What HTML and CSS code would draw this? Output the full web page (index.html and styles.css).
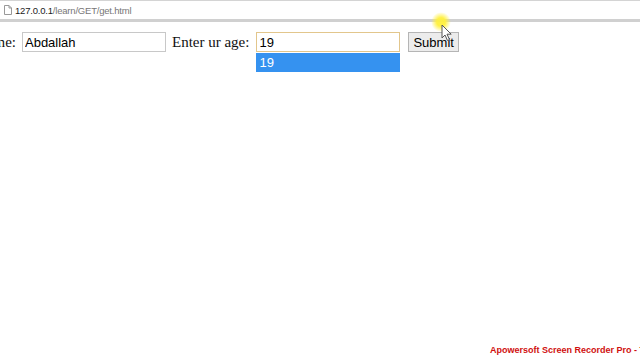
FILE: index.html
```html
<!DOCTYPE html>
<html lang="en">
<head>
  <meta charset="UTF-8">
  <title>get.html</title>
  <link rel="stylesheet" href="styles.css">
</head>
<body>
  <!-- Address bar -->
  <div class="address-bar">
    <svg class="page-icon" width="8" height="10" viewBox="0 0 8 10">
      <path d="M0.5 0.5h4.5l2.5 2.5v6.5h-7z" fill="#fff" stroke="#999"/>
      <path d="M5 0.5v2.5h2.5" fill="none" stroke="#999"/>
    </svg>
    <span class="host">127.0.0.1</span><span class="path">/learn/GET/get.html</span>
  </div>

  <div class="page">
    <form class="get-form">
      <span class="label name-label">Name:</span>
      <input class="field" type="text" name="name" value="Abdallah">
      <span class="label age-label">Enter ur age:</span>
      <div class="age-wrap">
        <input class="field focused" type="text" name="age" value="19">
        <div class="suggest">19</div>
      </div>
      <button class="submit" type="button">Submit</button>
    </form>
  </div>

  <!-- mouse pointer -->
  <div class="pointer">
    <div class="glow"></div>
    <svg width="12" height="18" viewBox="0 0 12 18">
      <path d="M1 1v13l3-3 2.5 5.5 2-1-2.5-5.3h4.2z" fill="#fff" stroke="#555" stroke-width="1"/>
    </svg>
  </div>

  <div class="watermark">Apowersoft Screen Recorder Pro - This video is recorded by trial version</div>
</body>
</html>
```

FILE: styles.css
```css
html, body {
  margin: 0;
  padding: 0;
  width: 640px;
  height: 360px;
  overflow: hidden;
  background: #fff;
}

.address-bar {
  height: 18px;
  border-top: 1px solid #d4d4d4;
  border-bottom: 3px solid #d0d0d0;
  display: flex;
  align-items: center;
  padding-left: 4px;
  font-family: "Liberation Sans", Arial, sans-serif;
  font-size: 9.5px;
  letter-spacing: -0.2px;
}

.page-icon {
  margin-right: 3px;
}

.host {
  color: #222;
}

.path {
  color: #777;
}

.page {
  padding-top: 10px;
}

.get-form {
  display: flex;
  align-items: flex-start;
  margin-left: -24px;
  font-family: "Liberation Serif", "Times New Roman", serif;
  font-size: 15px;
  color: #111;
}

.label {
  line-height: 20px;
  margin-right: 6px;
}

.age-label {
  margin-right: 7px;
}

.field {
  width: 144px;
  height: 20px;
  box-sizing: border-box;
  border: 1px solid #c8c8c8;
  padding: 0 2px;
  margin: 0 6px 0 0;
  font-family: "Liberation Sans", Arial, sans-serif;
  font-size: 13px;
  color: #000;
  outline: none;
}

.field.focused {
  border-color: #e2c68c;
}

.age-wrap {
  position: relative;
  margin-right: 2px;
}

.suggest {
  position: absolute;
  top: 21px;
  left: 0;
  width: 144px;
  height: 19px;
  box-sizing: border-box;
  padding-left: 3px;
  background: #3592f0;
  color: #fff;
  font-family: "Liberation Sans", Arial, sans-serif;
  font-size: 13px;
  line-height: 19px;
}

.submit {
  height: 20px;
  padding: 0 4px;
  border: 1px solid #b5b5b5;
  background: #ececec;
  font-family: "Liberation Sans", Arial, sans-serif;
  font-size: 13px;
  color: #000;
}

.pointer {
  position: absolute;
  left: 441px;
  top: 24px;
}

.pointer svg {
  position: relative;
}

.glow {
  position: absolute;
  left: -10px;
  top: -12px;
  width: 20px;
  height: 20px;
  border-radius: 50%;
  background: radial-gradient(circle, rgba(255, 240, 60, 0.95) 30%, rgba(255, 245, 120, 0) 70%);
}

.watermark {
  position: absolute;
  left: 490px;
  top: 345px;
  white-space: nowrap;
  font-family: "Liberation Sans", Arial, sans-serif;
  font-size: 9px;
  font-weight: bold;
  color: #d01010;
}
```
